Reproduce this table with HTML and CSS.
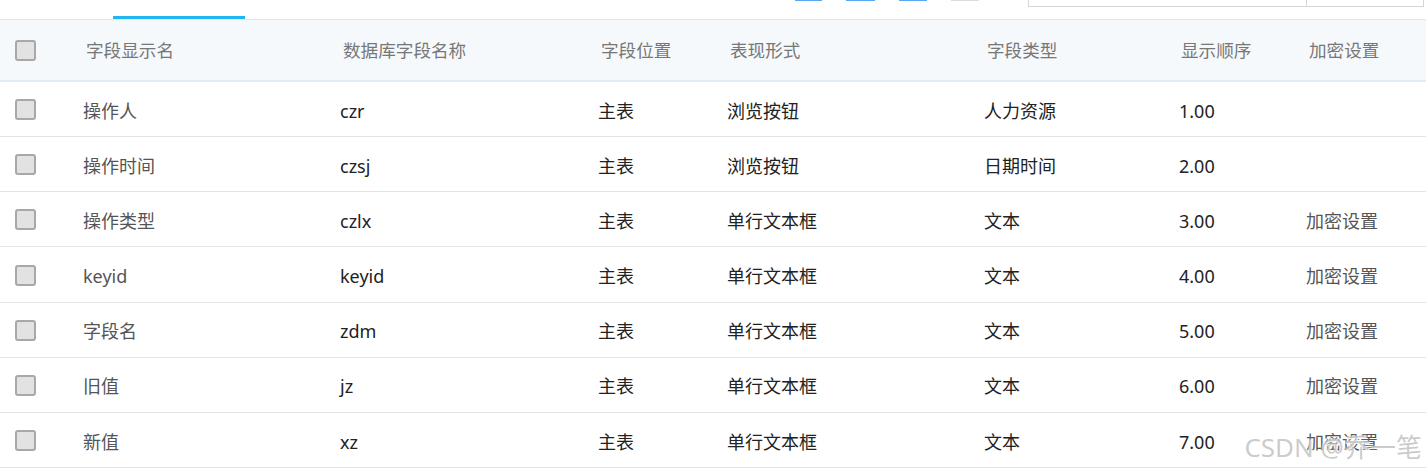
FILE: index.html
```html
<!DOCTYPE html>
<html lang="zh-CN">
<head>
<meta charset="utf-8">
<title>字段列表</title>
<link rel="stylesheet" href="styles.css">
</head>
<body>
<div class="page">
  <div class="topbar">
    <div class="tab"></div>
    <div class="btns">
      <span class="btn blue w27"></span>
      <span class="btn blue w29"></span>
      <span class="btn blue w28"></span>
      <span class="btn gray w28"></span>
    </div>
    <div class="search">
      <div class="search-input"></div>
      <div class="search-btn"></div>
    </div>
  </div>

  <div class="table">
    <div class="row head">
      <div class="cell chk"><span class="checkbox"></span></div>
      <div class="cell">字段显示名</div>
      <div class="cell">数据库字段名称</div>
      <div class="cell">字段位置</div>
      <div class="cell">表现形式</div>
      <div class="cell">字段类型</div>
      <div class="cell">显示顺序</div>
      <div class="cell">加密设置</div>
    </div>

    <div class="row">
      <div class="cell chk"><span class="checkbox"></span></div>
      <div class="cell soft">操作人</div>
      <div class="cell">czr</div>
      <div class="cell">主表</div>
      <div class="cell">浏览按钮</div>
      <div class="cell">人力资源</div>
      <div class="cell">1.00</div>
      <div class="cell soft"></div>
    </div>
    <div class="row">
      <div class="cell chk"><span class="checkbox"></span></div>
      <div class="cell soft">操作时间</div>
      <div class="cell">czsj</div>
      <div class="cell">主表</div>
      <div class="cell">浏览按钮</div>
      <div class="cell">日期时间</div>
      <div class="cell">2.00</div>
      <div class="cell soft"></div>
    </div>
    <div class="row">
      <div class="cell chk"><span class="checkbox"></span></div>
      <div class="cell soft">操作类型</div>
      <div class="cell">czlx</div>
      <div class="cell">主表</div>
      <div class="cell">单行文本框</div>
      <div class="cell">文本</div>
      <div class="cell">3.00</div>
      <div class="cell soft">加密设置</div>
    </div>
    <div class="row">
      <div class="cell chk"><span class="checkbox"></span></div>
      <div class="cell soft">keyid</div>
      <div class="cell">keyid</div>
      <div class="cell">主表</div>
      <div class="cell">单行文本框</div>
      <div class="cell">文本</div>
      <div class="cell">4.00</div>
      <div class="cell soft">加密设置</div>
    </div>
    <div class="row">
      <div class="cell chk"><span class="checkbox"></span></div>
      <div class="cell soft">字段名</div>
      <div class="cell">zdm</div>
      <div class="cell">主表</div>
      <div class="cell">单行文本框</div>
      <div class="cell">文本</div>
      <div class="cell">5.00</div>
      <div class="cell soft">加密设置</div>
    </div>
    <div class="row">
      <div class="cell chk"><span class="checkbox"></span></div>
      <div class="cell soft">旧值</div>
      <div class="cell">jz</div>
      <div class="cell">主表</div>
      <div class="cell">单行文本框</div>
      <div class="cell">文本</div>
      <div class="cell">6.00</div>
      <div class="cell soft">加密设置</div>
    </div>
    <div class="row">
      <div class="cell chk"><span class="checkbox"></span></div>
      <div class="cell soft">新值</div>
      <div class="cell">xz</div>
      <div class="cell">主表</div>
      <div class="cell">单行文本框</div>
      <div class="cell">文本</div>
      <div class="cell">7.00</div>
      <div class="cell soft">加密设置</div>
    </div>
  </div>

  <div class="watermark">CSDN @乔一笔</div>
</div>
</body>
</html>
```

FILE: styles.css
```css
html, body {
  margin: 0;
  padding: 0;
  background: #ffffff;
}

body {
  font-family: "Noto Sans", "Noto Sans CJK SC", sans-serif;
  color: #222222;
}

.page {
  position: relative;
  width: 1426px;
  height: 475px;
  overflow: hidden;
}

/* ---------- top bar ---------- */
.topbar {
  display: flex;
  align-items: flex-start;
  height: 19px;
  border-bottom: 1px solid #e6e6e6;
}

.tab {
  align-self: flex-end;
  margin-left: 113px;
  width: 132px;
  height: 3px;
  background: #23b5f3;
}

.btns {
  display: flex;
  gap: 24px;
  margin-left: 550px;
}

.btn {
  display: block;
  height: 1px;
}
.btn.blue { background: #5aa7f2; }
.btn.gray { background: #dcdcdc; }
.w27 { width: 27px; }
.w28 { width: 28px; }
.w29 { width: 29px; }

.search {
  display: flex;
  margin-left: 49px;
  height: 7px;
}

.search-input {
  width: 277px;
  border-left: 1px solid #d6d6d6;
  border-bottom: 1px solid #d6d6d6;
}

.search-btn {
  width: 116px;
  border-left: 1px solid #d6d6d6;
  border-right: 1px solid #d6d6d6;
  border-bottom: 1px solid #d6d6d6;
}

/* ---------- table ---------- */
.table {
  display: flex;
  flex-direction: column;
}

.row {
  display: grid;
  grid-template-columns: 80px 257px 258px 129px 257px 195px 127px 1fr;
  align-items: center;
  height: 55.17px;
  box-sizing: border-box;
  border-bottom: 1px solid #e4e4e4;
  font-size: 18px;
  line-height: 24px;
}

.row.head {
  height: 62px;
  background: #f6f9fc;
  border-bottom: 2px solid #e2ebf4;
  font-size: 17.6px;
  color: #777777;
}

.cell {
  padding-left: 3px;
  padding-top: 3px;
  white-space: nowrap;
}

.head .cell {
  padding-left: 6px;
  padding-top: 0;
}

.head .cell:nth-child(7) {
  padding-left: 5px;
}

.cell.soft {
  color: #555555;
}

.cell.chk,
.head .cell.chk {
  padding-left: 15px;
  padding-top: 1px;
  display: flex;
  align-items: center;
}

.checkbox {
  display: block;
  width: 21px;
  height: 21px;
  box-sizing: border-box;
  border: 2px solid #a8a8a8;
  border-radius: 3px;
  background: #e2e2e2;
}

/* ---------- watermark ---------- */
.watermark {
  position: absolute;
  right: 4px;
  top: 430px;
  font-family: "Noto Sans", "Noto Sans CJK SC", sans-serif;
  font-size: 26px;
  line-height: 34px;
  color: rgba(160, 160, 160, 0.55);
  text-shadow: 0 0 2px #ffffff, 1px 1px 1px rgba(255,255,255,0.9);
  white-space: nowrap;
  pointer-events: none;
}
```
